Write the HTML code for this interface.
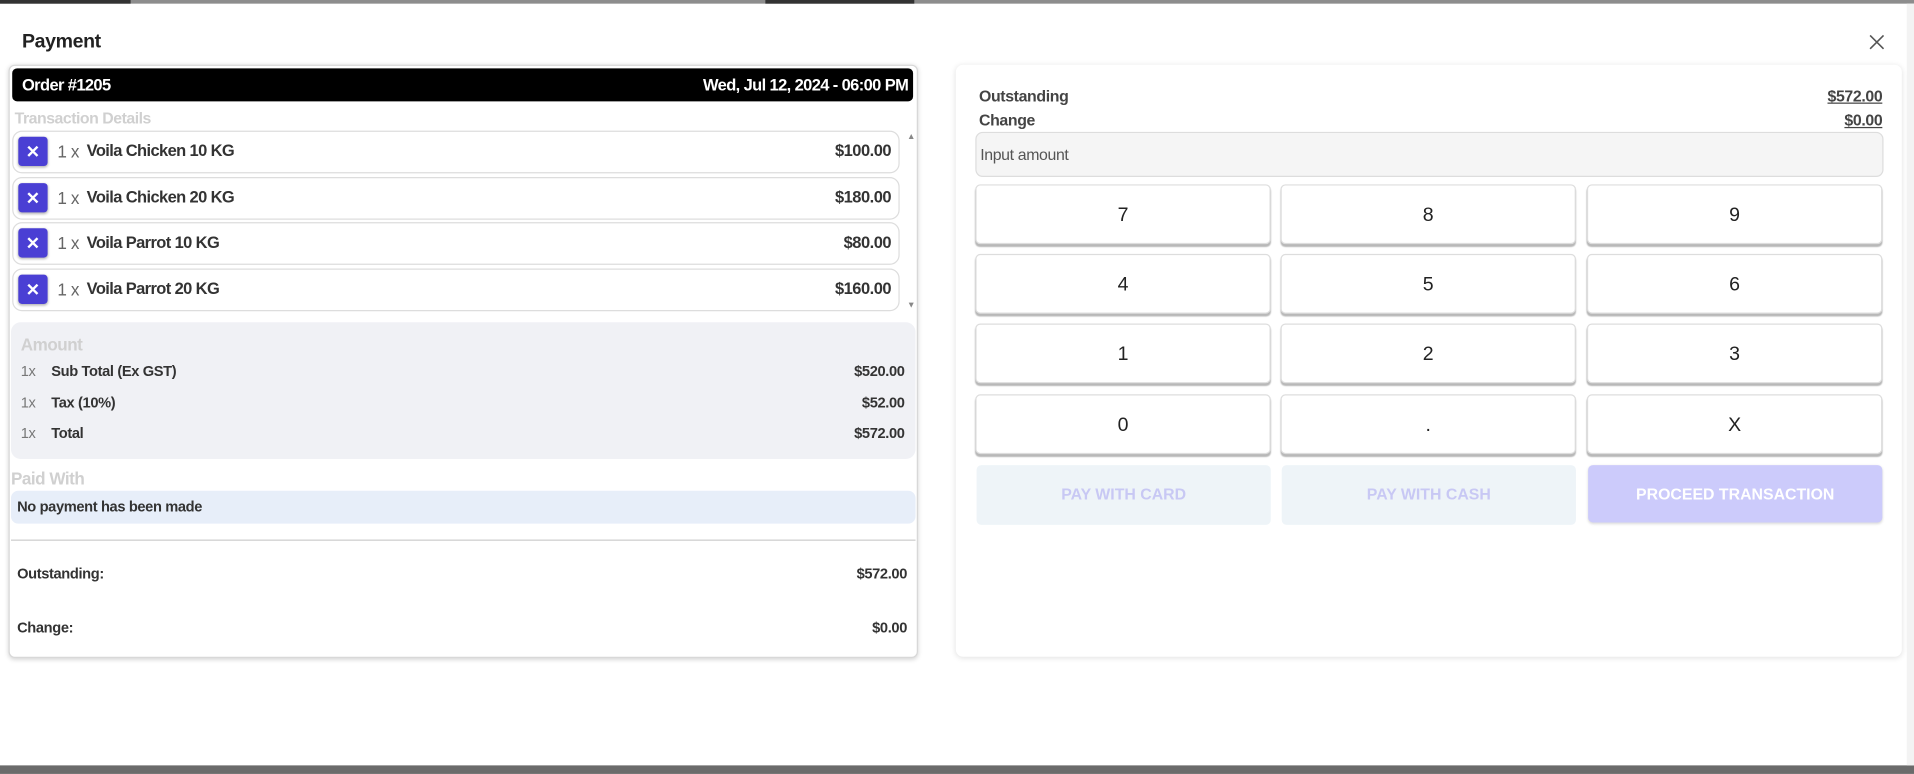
<!DOCTYPE html>
<html><head><meta charset="utf-8"><style>
html,body{margin:0;padding:0;width:1914px;height:774px;overflow:hidden;background:#fff;font-family:"Liberation Sans",Arial,sans-serif}
#w{position:absolute;left:0;top:0;width:1568px;height:634px;transform:scale(1.2207);transform-origin:0 0;background:#fff}
.a{position:absolute}
.bar{top:0;height:3px;background:#8d8d8d}
.card{border:1px solid #d8d8d8;border-radius:5px;box-shadow:0 1px 4px rgba(0,0,0,.18);background:#fff}
.item{left:10px;width:725px;height:33px;border:1px solid #ddd;border-radius:8px;background:#fff}
.xb{left:4px;top:4px;width:24px;height:24px;background:#4a3fd4;border-radius:3px;color:#fff;font-weight:bold;font-size:14px;text-align:center;line-height:24px;box-shadow:0 1px 2px rgba(0,0,0,.3)}
.q{left:36px;top:8px;font-size:14px;color:#666;letter-spacing:-.3px}
.n{left:60px;top:8px;font-size:13.5px;font-weight:bold;color:#333;letter-spacing:-.5px}
.p{right:6px;top:8px;font-size:13.5px;font-weight:bold;color:#333;letter-spacing:-.4px}
.lbl{color:#d0d0d0;font-weight:bold;letter-spacing:-.4px}
.row{font-size:12px;color:#333;letter-spacing:-.3px}
.k{width:240px;height:47px;border:1px solid #ddd;border-radius:4px;box-shadow:0 2px 1px #b8b8b8;background:#fff;text-align:center;line-height:49px;font-size:16px;color:#222}
.pb{top:381px;width:241px;height:49px;border-radius:4px;text-align:center;line-height:47px;font-size:13px;font-weight:bold;letter-spacing:0}
</style></head><body><div id="w">
<div class="a bar" style="left:0;width:1568px"></div>
<div class="a" style="left:0;top:0;width:107px;height:3px;background:#333"></div>
<div class="a" style="left:627px;top:0;width:122px;height:3px;background:#333"></div>
<div class="a" style="left:0;top:627px;width:1568px;height:7px;background:#6b6b6b"></div>
<div class="a" style="left:1562px;top:3px;width:6px;height:624px;background:#f3f3f3"></div>

<div class="a" style="left:18px;top:26px;font-size:16px;font-weight:bold;color:#222;letter-spacing:-.3px">Payment</div>
<svg class="a" style="left:1531px;top:28px" width="13" height="13" viewBox="0 0 13 13"><path d="M1 1L12 12M12 1L1 12" stroke="#555" stroke-width="1.3"/></svg>

<div class="a card" style="left:7px;top:53px;width:743px;height:484px"></div>
<div class="a" style="left:10px;top:56px;width:738px;height:27px;background:#000;border-radius:4px"></div>
<div class="a" style="left:18px;top:62px;color:#fff;font-weight:bold;font-size:13.5px;letter-spacing:-.5px">Order #1205</div>
<div class="a" style="right:824px;top:62px;color:#fff;font-weight:bold;font-size:13.5px;letter-spacing:-.5px">Wed, Jul 12, 2024 - 06:00 PM</div>
<div class="a lbl" style="left:12px;top:89px;font-size:13px">Transaction Details</div>

<div class="a item" style="top:107px"><div class="a xb">✕</div><div class="a q">1 x</div><div class="a n">Voila Chicken 10 KG</div><div class="a p">$100.00</div></div>
<div class="a item" style="top:145px"><div class="a xb">✕</div><div class="a q">1 x</div><div class="a n">Voila Chicken 20 KG</div><div class="a p">$180.00</div></div>
<div class="a item" style="top:182px"><div class="a xb">✕</div><div class="a q">1 x</div><div class="a n">Voila Parrot 10 KG</div><div class="a p">$80.00</div></div>
<div class="a item" style="top:220px"><div class="a xb">✕</div><div class="a q">1 x</div><div class="a n">Voila Parrot 20 KG</div><div class="a p">$160.00</div></div>
<div class="a" style="left:743px;top:109px;font-size:7px;color:#888">▲</div>
<div class="a" style="left:743px;top:247px;font-size:7px;color:#888">▼</div>

<div class="a" style="left:9px;top:264px;width:741px;height:112px;background:#f0f1f5;border-radius:8px"></div>
<div class="a lbl" style="left:17px;top:274px;font-size:14px">Amount</div>
<div class="a row" style="left:17px;top:297px;color:#777">1x</div><div class="a row" style="left:42px;top:297px;font-weight:bold">Sub Total (Ex GST)</div><div class="a row" style="right:827px;top:297px;font-weight:bold">$520.00</div>
<div class="a row" style="left:17px;top:323px;color:#777">1x</div><div class="a row" style="left:42px;top:323px;font-weight:bold">Tax (10%)</div><div class="a row" style="right:827px;top:323px;font-weight:bold">$52.00</div>
<div class="a row" style="left:17px;top:348px;color:#777">1x</div><div class="a row" style="left:42px;top:348px;font-weight:bold">Total</div><div class="a row" style="right:827px;top:348px;font-weight:bold">$572.00</div>

<div class="a lbl" style="left:9px;top:384px;font-size:14px">Paid With</div>
<div class="a" style="left:9px;top:402px;width:741px;height:27px;background:#e7eef9;border-radius:6px"></div>
<div class="a row" style="left:14px;top:408px;font-weight:bold">No payment has been made</div>
<div class="a" style="left:9px;top:442px;width:741px;height:1px;background:#ccc"></div>
<div class="a row" style="left:14px;top:463px;font-weight:bold">Outstanding:</div><div class="a row" style="right:825px;top:463px;font-weight:bold">$572.00</div>
<div class="a row" style="left:14px;top:507px;font-weight:bold">Change:</div><div class="a row" style="right:825px;top:507px;font-weight:bold">$0.00</div>

<div class="a" style="left:783px;top:53px;width:775px;height:485px;background:#fff;border-radius:6px;box-shadow:0 1px 5px rgba(0,0,0,.12)"></div>
<div class="a" style="left:802px;top:71px;font-size:13px;font-weight:bold;color:#444;letter-spacing:-.3px">Outstanding</div>
<div class="a" style="right:26px;top:71px;font-size:13px;font-weight:bold;color:#444;text-decoration:underline;letter-spacing:-.3px">$572.00</div>
<div class="a" style="left:802px;top:91px;font-size:13px;font-weight:bold;color:#444;letter-spacing:-.3px">Change</div>
<div class="a" style="right:26px;top:91px;font-size:13px;font-weight:bold;color:#444;text-decoration:underline;letter-spacing:-.3px">$0.00</div>
<div class="a" style="left:799px;top:108px;width:742px;height:35px;background:#f5f5f5;border:1px solid #ddd;border-radius:6px"></div>
<div class="a" style="left:803px;top:119px;font-size:13px;color:#555;letter-spacing:-.3px">Input amount</div>

<div class="a k" style="left:799px;top:151px">7</div><div class="a k" style="left:1049px;top:151px">8</div><div class="a k" style="left:1300px;top:151px">9</div>
<div class="a k" style="left:799px;top:208px">4</div><div class="a k" style="left:1049px;top:208px">5</div><div class="a k" style="left:1300px;top:208px">6</div>
<div class="a k" style="left:799px;top:265px">1</div><div class="a k" style="left:1049px;top:265px">2</div><div class="a k" style="left:1300px;top:265px">3</div>
<div class="a k" style="left:799px;top:323px">0</div><div class="a k" style="left:1049px;top:323px">.</div><div class="a k" style="left:1300px;top:323px">X</div>

<div class="a pb" style="left:800px;background:#eef4f8;color:#c8c8f4">PAY WITH CARD</div>
<div class="a pb" style="left:1050px;background:#eef4f8;color:#c8c8f4">PAY WITH CASH</div>
<div class="a pb" style="left:1301px;height:47px;line-height:47px;background:#cccbfb;color:#fff;box-shadow:0 1px 2px rgba(0,0,0,.15)">PROCEED TRANSACTION</div>
</div></body></html>
